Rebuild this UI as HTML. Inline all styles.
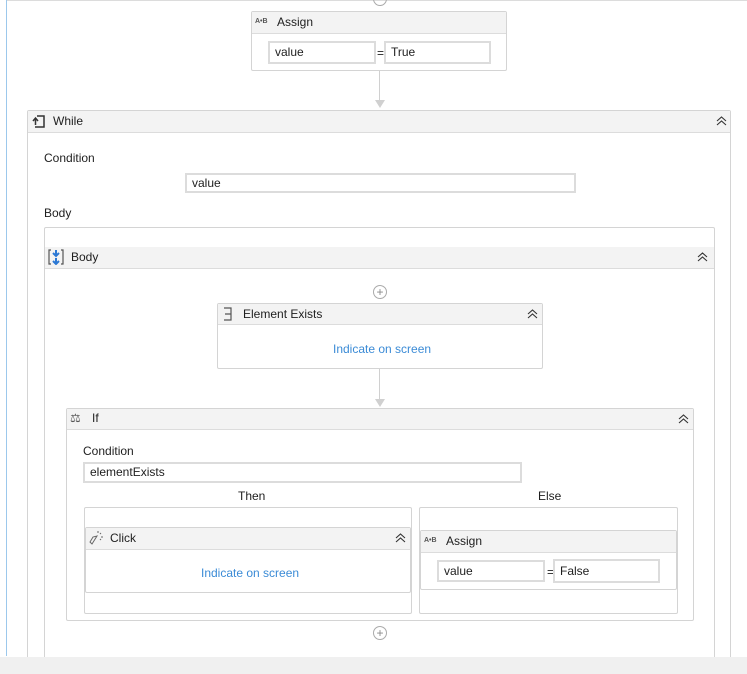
<!DOCTYPE html><html><head><style>
body{margin:0;width:747px;height:674px;position:relative;overflow:hidden;background:#fff;font-family:"Liberation Sans",sans-serif;font-size:12px;color:#1e1e1e}
.a{position:absolute;box-sizing:border-box}
.box{border:1px solid #d4d4d4;border-radius:2px;background:#fff}
.hd{position:absolute;left:0;right:0;top:0;height:21px;background:#f3f3f3;border-bottom:1px solid #dcdcdc}
.t{position:absolute;white-space:nowrap}
.in{border:2px solid #dcdcdc;background:#fff;padding-left:5px;line-height:17px}
.lk{color:#3b8bd6}
.chev{position:absolute;width:11px;height:10px}
.plus{position:absolute;width:12px;height:12px;border:1px solid #aaa;border-radius:50%;text-align:center;line-height:12px;color:#888;font-size:12px}
.vl{position:absolute;width:1px;background:#d0d0d0}
.ar{position:absolute;width:0;height:0;border-left:5px solid transparent;border-right:5px solid transparent;border-top:8px solid #d0d0d0}
.ab{font-size:7px;font-weight:bold;color:#555}
</style></head><body>
<svg width="0" height="0" style="position:absolute"><defs><symbol id="cv" viewBox="0 0 11 10"><path d="M1 5 L5.5 1 L10 5 M1 9 L5.5 5 L10 9" fill="none" stroke="#333" stroke-width="1.1"/></symbol></defs></svg>
<div class="a" style="left:6px;top:0;width:1px;height:656px;background:#9cc8ec"></div>
<div class="a" style="left:7px;top:0;width:740px;height:1px;background:#dcdcdc"></div>
<div class="plus" style="left:373px;top:-8px"></div>

<!-- Assign top -->
<div class="a box" style="left:251px;top:11px;width:256px;height:60px"><div class="hd"></div>
<span class="t ab" style="left:3px;top:6px">A•B</span><span class="t" style="left:25px;top:3px">Assign</span>
<div class="a in" style="left:16px;top:29px;width:108px;height:23px;line-height:19px">value</div>
<span class="t" style="left:125px;top:34px">=</span>
<div class="a in" style="left:132px;top:29px;width:107px;height:23px;line-height:19px">True</div></div>
<div class="vl" style="left:379px;top:71px;height:30px"></div><div class="ar" style="left:375px;top:100px"></div>

<!-- While -->
<div class="a box" style="left:27px;top:110px;width:704px;height:560px"><div class="hd"></div>
<svg class="t" style="left:4px;top:4px" width="13" height="13" viewBox="0 0 13 13"><path d="M5 1 H12 V12 H3 M1 6 L3.5 3 L6 6 M3.5 3 V10" fill="none" stroke="#333" stroke-width="1.5"/></svg>
<span class="t" style="left:25px;top:3px">While</span>
<svg class="chev" style="left:688px;top:5px"><use href="#cv"/></svg>
<span class="t" style="left:16px;top:40px">Condition</span>
<div class="a in" style="left:157px;top:62px;width:391px;height:20px">value</div>
<span class="t" style="left:16px;top:95px">Body</span>
</div>

<!-- Body seq -->
<div class="a box" style="left:44px;top:227px;width:671px;height:440px"><div class="hd" style="top:19px"></div>
<svg class="t" style="left:3px;top:21px" width="16" height="16" viewBox="0 0 16 16"><path d="M3 1 H1 V15 H3 M13 1 H15 V15 H13" fill="none" stroke="#555" stroke-width="1.2"/><path d="M8 1 V7 M5 4 L8 7 L11 4 M8 9 V15 M5 12 L8 15 L11 12" fill="none" stroke="#2b78d4" stroke-width="2"/></svg>
<span class="t" style="left:26px;top:22px">Body</span>
<svg class="chev" style="left:652px;top:24px"><use href="#cv"/></svg></div>
<div class="plus" style="left:373px;top:285px">+</div>

<!-- Element exists -->
<div class="a box" style="left:217px;top:303px;width:326px;height:66px"><div class="hd" style="height:20px"></div>
<svg class="t" style="left:5px;top:3px" width="10" height="14" viewBox="0 0 10 14"><path d="M1 1 H8 V13 H1 M2 7 H8" fill="none" stroke="#555" stroke-width="1.2"/></svg>
<span class="t" style="left:25px;top:3px">Element Exists</span>
<svg class="chev" style="left:309px;top:5px"><use href="#cv"/></svg>
<span class="t lk" style="left:115px;top:38px">Indicate on screen</span></div>
<div class="vl" style="left:379px;top:369px;height:30px"></div><div class="ar" style="left:375px;top:399px"></div>

<!-- If -->
<div class="a box" style="left:66px;top:408px;width:628px;height:213px"><div class="hd" style="height:20px"></div>
<span class="t" style="left:3px;top:2px;font-size:12px;color:#555">⚖</span><span class="t" style="left:25px;top:2px">If</span>
<svg class="chev" style="left:611px;top:5px"><use href="#cv"/></svg>
<span class="t" style="left:16px;top:35px">Condition</span>
<div class="a in" style="left:16px;top:53px;width:439px;height:21px">elementExists</div>
<span class="t" style="left:171px;top:80px">Then</span>
<span class="t" style="left:471px;top:80px">Else</span>
</div>

<div class="a box" style="left:84px;top:507px;width:328px;height:107px"></div>
<div class="a box" style="left:85px;top:527px;width:326px;height:66px"><div class="hd" style="height:21px"></div>
<svg class="t" style="left:2px;top:2px" width="16" height="16" viewBox="0 0 16 16"><path d="M9 6 L4 14 L2 12 L5 7 Z M10 1 V3 M13 3 L12 4 M15 7 H13 M13 10 L12 9" fill="none" stroke="#666" stroke-width="1"/></svg>
<span class="t" style="left:24px;top:3px">Click</span>
<svg class="chev" style="left:309px;top:5px"><use href="#cv"/></svg>
<span class="t lk" style="left:115px;top:38px">Indicate on screen</span></div>

<div class="a box" style="left:419px;top:507px;width:259px;height:107px"></div>
<div class="a box" style="left:420px;top:530px;width:257px;height:60px"><div class="hd"></div>
<span class="t ab" style="left:3px;top:6px">A•B</span><span class="t" style="left:25px;top:3px">Assign</span>
<div class="a in" style="left:16px;top:29px;width:108px;height:22px;line-height:18px">value</div>
<span class="t" style="left:126px;top:34px">=</span>
<div class="a in" style="left:132px;top:28px;width:107px;height:24px;line-height:20px">False</div></div>

<div class="plus" style="left:373px;top:626px">+</div>
<div class="a" style="left:0;top:657px;width:747px;height:17px;background:#f0f0f0;z-index:10"></div>
</body></html>
